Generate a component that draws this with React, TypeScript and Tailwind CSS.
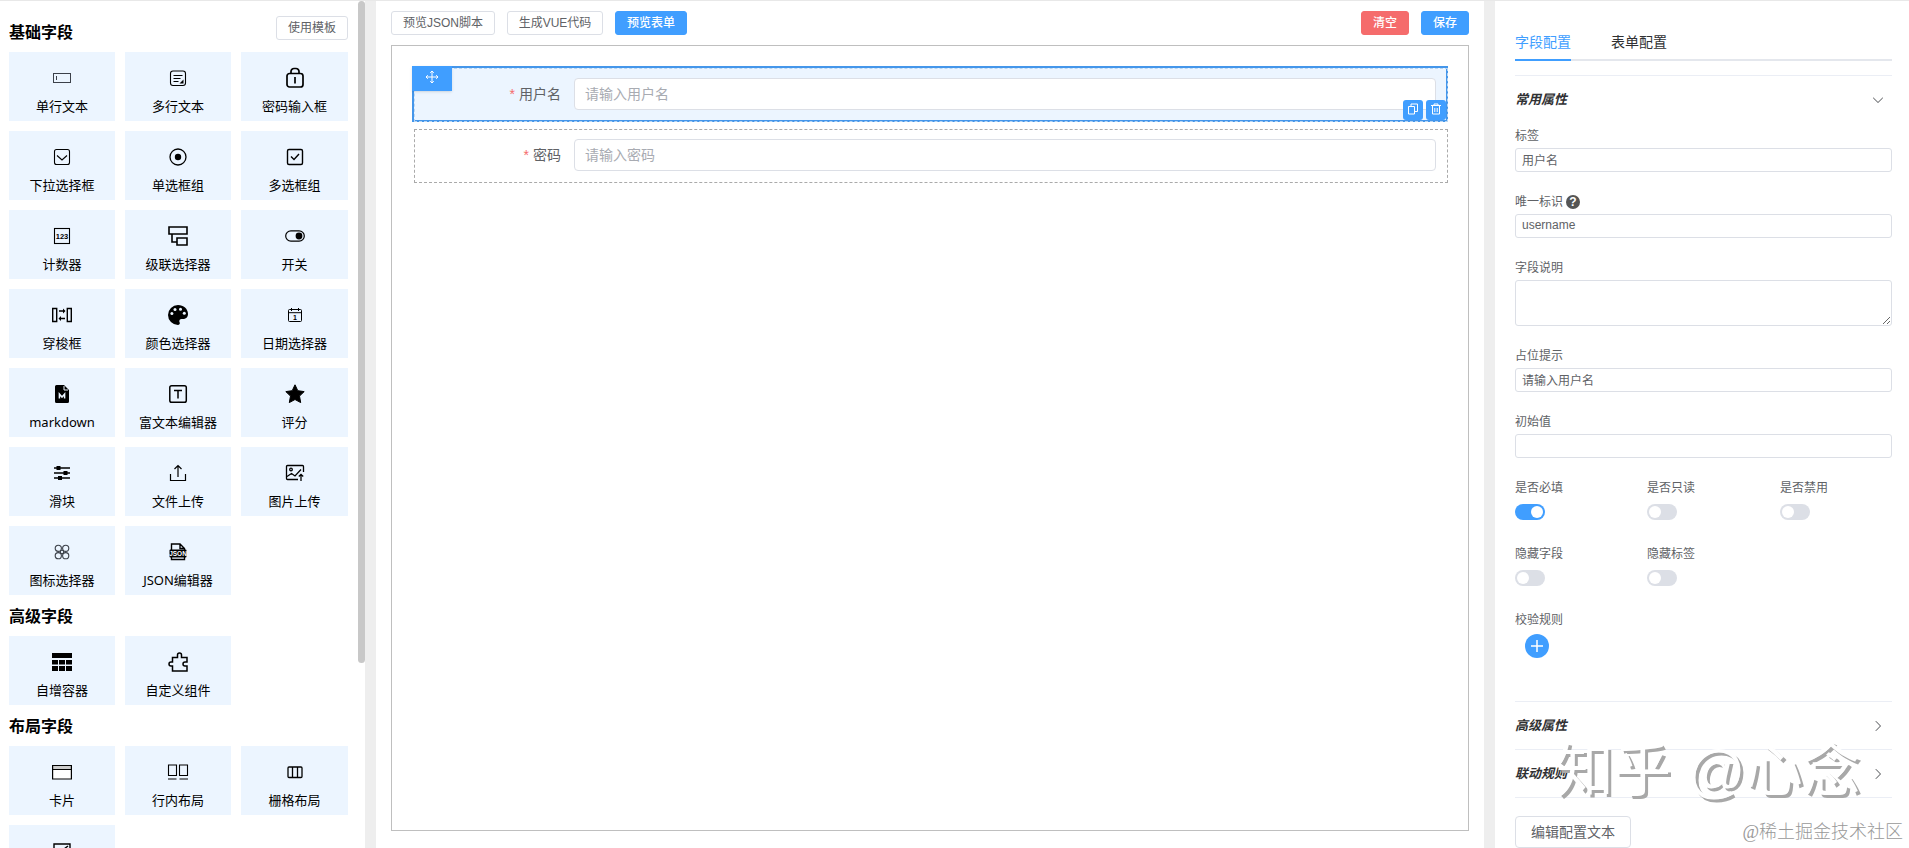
import { useState } from 'react';
import type { ReactNode } from 'react';
import clsx from 'clsx';

type Field = { name: string; icon: ReactNode };

const line = { fill: 'none', stroke: 'currentColor', strokeWidth: 1.1 };

const basicFields: Field[] = [
  {
    name: '单行文本',
    icon: (
      <g fill="none" stroke="#3c414a" strokeWidth="1">
        <rect x="1.5" y="5.5" width="17" height="9" />
        <path d="M4.5 8v4" />
      </g>
    ),
  },
  {
    name: '多行文本',
    icon: (
      <g {...line}>
        <rect x="2.5" y="3" width="15" height="14.5" rx="2.5" />
        <path d="M5.5 7.5h9M5.5 10.5h7M5.5 13.5h5" />
        <path d="M15.5 11.5v4h-4z" fill="currentColor" stroke="none" />
      </g>
    ),
  },
  {
    name: '密码输入框',
    icon: (
      <g fill="none" stroke="currentColor" strokeWidth="1.7">
        <rect x="2" y="5.5" width="16" height="13.500" rx="2.5" />
        <path d="M6 5.5V3.500A3 3 0 0 1 9 .5h2a3 3 0 0 1 3 3v2M10 9v6.500" />
      </g>
    ),
  },
  {
    name: '下拉选择框',
    icon: (
      <g {...line}>
        <rect x="2.5" y="2.5" width="15" height="15" rx="2" />
        <path d="M5 8.500l5 4.500 5-4.500" />
      </g>
    ),
  },
  {
    name: '单选框组',
    icon: (
      <g>
        <circle cx="10" cy="10" r="8" fill="none" stroke="currentColor" strokeWidth="1.300" />
        <circle cx="10" cy="10" r="3.200" fill="currentColor" />
      </g>
    ),
  },
  {
    name: '多选框组',
    icon: (
      <g fill="none" stroke="currentColor" strokeWidth="1.400">
        <rect x="2.500" y="2.500" width="15" height="15" rx="1.500" />
        <path d="M6 9.500l3 3 5-5.500" />
      </g>
    ),
  },
  {
    name: '计数器',
    icon: (
      <g>
        <rect x="2.500" y="2.500" width="15" height="15" {...line} />
        <text x="10" y="12.700" textAnchor="middle" fontSize="7.500" fontWeight="700" fontFamily="Liberation Sans" fill="currentColor">
          123
        </text>
      </g>
    ),
  },
  {
    name: '级联选择器',
    icon: (
      <g fill="none" stroke="currentColor" strokeWidth="1.600">
        <path d="M1 1h18v7H1zM9 12h10v7H9zM4 8v8h5" />
      </g>
    ),
  },
  {
    name: '开关',
    icon: (
      <g>
        <rect x="0.700" y="4.800" width="18.600" height="10.400" rx="5.200" fill="none" stroke="currentColor" strokeWidth="1.200" />
        <circle cx="14" cy="10" r="3.400" fill="currentColor" />
      </g>
    ),
  },
  {
    name: '穿梭框',
    icon: (
      <g fill="none" stroke="currentColor" strokeWidth="1.400">
        <path d="M.7 3.500h4v13h-4zM15.300 3.500h4v13h-4z" />
        <path d="M7 6h5M8 13.500h5" />
        <path d="M11 3.500L13.500 6 11 8.500zM9 11l-2.500 2.500L9 16z" fill="currentColor" stroke="none" />
      </g>
    ),
  },
  {
    name: '颜色选择器',
    icon: (
      <g>
        <path
          d="M10 0a10 10 0 1 0 0 20c1.300 0 1.900-.9 1.800-1.900-.1-1.300-.9-1.600-.3-2.900.5-1 1.500-1.200 3-1.200 3.500 0 5.500-2 5.500-5C20 3.800 15.500 0 10 0z"
          fill="currentColor"
        />
        <g fill="#ecf5ff">
          <circle cx="3.900" cy="8.500" r="1.500" />
          <circle cx="7" cy="4.500" r="1.500" />
          <circle cx="12.500" cy="4.200" r="1.500" />
          <circle cx="16.300" cy="8.200" r="1.500" />
        </g>
      </g>
    ),
  },
  {
    name: '日期选择器',
    icon: (
      <g>
        <path
          d="M3.500 5.500a1 1 0 0 1 1-1h11a1 1 0 0 1 1 1v10a1 1 0 0 1-1 1h-11a1 1 0 0 1-1-1zM3.500 7.700h13M6.500 3v3M13.500 3v3"
          fill="none"
          stroke="currentColor"
        />
        <text x="10" y="14.800" textAnchor="middle" fontSize="7" fontWeight="700" fontFamily="Liberation Sans" fill="currentColor">
          1
        </text>
      </g>
    ),
  },
  {
    name: 'markdown',
    icon: (
      <g>
        <path d="M4.500 1H12l5 5v11.500a1.500 1.500 0 0 1-1.500 1.500h-11A1.500 1.500 0 0 1 3 17.500v-15A1.500 1.500 0 0 1 4.500 1z" fill="currentColor" />
        <path d="M12 2v4h4" fill="none" stroke="#ecf5ff" />
        <path d="M7.400 14.500V10l2.600 3 2.600-3v4.500" fill="none" stroke="#ecf5ff" strokeWidth="1.500" />
      </g>
    ),
  },
  {
    name: '富文本编辑器',
    icon: (
      <g fill="none" stroke="currentColor" strokeWidth="1.500">
        <rect x="1.800" y="1.800" width="16.500" height="16.500" rx="1.800" />
        <path d="M6 6.500h8M10 6.500v8" />
      </g>
    ),
  },
  {
    name: '评分',
    icon: (
      <path
        d="M10 .8l2.800 5.900 6.400.9-4.700 4.500 1.200 6.500L10 15.500l-5.700 3.100 1.200-6.500L.8 7.600l6.400-.9z"
        fill="currentColor"
        stroke="currentColor"
        strokeLinejoin="round"
      />
    ),
  },
  {
    name: '滑块',
    icon: (
      <g>
        <path d="M2 5h16M2 10h16M2 15h16" fill="none" stroke="currentColor" strokeWidth="1.300" />
        <path d="M4.500 3h4v4h-4zM11.500 8h4v4h-4zM6 13h4v4H6z" fill="currentColor" />
      </g>
    ),
  },
  {
    name: '文件上传',
    icon: <path d="M2.500 11v6.500h15V11M10 14V2.500M6.500 6L10 2.500 13.500 6" fill="none" stroke="currentColor" strokeWidth="1.200" />,
  },
  {
    name: '图片上传',
    icon: (
      <g {...line} strokeWidth="1.300">
        <path d="M13 16.500H2.500a1 1 0 0 1-1-1v-12a1 1 0 0 1 1-1h15a1 1 0 0 1 1 1V9" />
        <circle cx="6" cy="6.500" r="1.300" />
        <path d="M2 13.500l4.500-3 3.500 2.500L16 6.500M16 18v-6M13.800 13.500L16 11.300l2.200 2.200" />
      </g>
    ),
  },
  {
    name: '图标选择器',
    icon: (
      <g fill="none" stroke="#3c414a" strokeWidth="1.100">
        <circle cx="6.300" cy="6.300" r="3.100" />
        <circle cx="13.700" cy="6.300" r="3.100" />
        <circle cx="6.300" cy="13.700" r="3.100" />
        <circle cx="13.700" cy="13.700" r="3.100" />
        <circle cx="10" cy="10" r="1.700" />
      </g>
    ),
  },
  {
    name: 'JSON编辑器',
    icon: (
      <g>
        <path d="M3.500 8V2H12l4.500 4.500V8M12 2v4.500h4.500M3.500 15v2.500h13V15" fill="none" stroke="currentColor" strokeWidth="1.400" />
        <rect x="1.500" y="7.500" width="17" height="8" rx="1" fill="currentColor" />
        <text x="10" y="14" textAnchor="middle" fontSize="6.500" fontWeight="700" fontFamily="Liberation Sans" fill="#fff">
          JSON
        </text>
      </g>
    ),
  },
];

const advancedFields: Field[] = [
  {
    name: '自增容器',
    icon: <path d="M0 1h20v5H0zM0 8h6v4.500H0zM7 8h6v4.500H7zM14 8h6v4.500h-6zM0 14h6v5H0zM7 14h6v5H7zM14 14h6v5h-6z" fill="currentColor" />,
  },
  {
    name: '自定义组件',
    icon: (
      <path
        d="M4.500 5.500h5V3a2 2 0 0 1 4 0v2.500H19V10h-2a2 2 0 0 0 0 4h2v5H4.500v-5H3a2 2 0 0 1 0-4h1.500z"
        fill="none"
        stroke="currentColor"
        strokeWidth="1.500"
      />
    ),
  },
];

const layoutFields: Field[] = [
  {
    name: '卡片',
    icon: (
      <g stroke="currentColor" strokeWidth="1.200">
        <path d="M.6 3.500h18.800v13.500H.6z" fill="#fff" />
        <path d="M.6 3.500h18.800v4H.6z" fill="#ccc" />
      </g>
    ),
  },
  {
    name: '行内布局',
    icon: <path d="M.5 3h8v10.500h-8zM11.500 3h8v10.500h-8zM0 17h8.500M11.500 17H20" {...line} />,
  },
  {
    name: '栅格布局',
    icon: (
      <g {...line} strokeWidth="1.300">
        <rect x="3" y="5" width="14" height="10.500" rx="1" />
        <path d="M7.500 5v10.500M12.500 5v10.500" />
      </g>
    ),
  },
  {
    name: '',
    icon: (
      <g {...line} strokeWidth="1.400">
        <path d="M2 18V3h16v15M12 8l4-3" />
      </g>
    ),
  },
];

function FieldGroup({ title, fields, extra }: { title: string; fields: Field[]; extra?: ReactNode }) {
  return (
    <section>
      <div className="flex h-[41px] items-center justify-between">
        <h3 className="text-base font-bold text-black">{title}</h3>
        {extra}
      </div>
      <div className="grid grid-cols-[106px_106px_107px] gap-2.5">
        {fields.map((field, i) => (
          <div key={i} className="flex h-[69px] cursor-move flex-col items-center bg-[#ecf5ff] pt-4 text-black">
            <svg viewBox="0 0 20 20" className="size-5 shrink-0 overflow-visible">
              {field.icon}
            </svg>
            <span className="mt-2 text-[13px] leading-5">{field.name}</span>
          </div>
        ))}
      </div>
    </section>
  );
}

function Button({
  children,
  type = 'default',
  className,
}: {
  children: ReactNode;
  type?: 'default' | 'primary' | 'danger';
  className?: string;
}) {
  return (
    <button
      className={clsx(
        'flex h-6 shrink-0 items-center justify-center rounded-[3px] border text-xs whitespace-nowrap',
        type === 'default' && 'border-[#dcdfe6] bg-white text-[#606266]',
        type === 'primary' && 'border-[#409eff] bg-[#409eff] font-medium text-white',
        type === 'danger' && 'border-[#f56c6c] bg-[#f56c6c] font-medium text-white',
        className,
      )}
    >
      {children}
    </button>
  );
}

function CanvasItem({ label, placeholder }: { label: string; placeholder: string }) {
  return (
    <div className="flex h-8 w-full items-center">
      <label className="w-[159px] shrink-0 pr-[13px] text-right text-sm text-[#606266]">
        <span className="mr-1 text-[#f56c6c]">*</span>
        {label}
      </label>
      <div className="h-8 flex-1 rounded border border-[#dcdfe6] bg-white px-2.5 text-sm leading-[30px] text-[#a8abb2]">{placeholder}</div>
    </div>
  );
}

function FormItem({ label, children }: { label: ReactNode; children: ReactNode }) {
  return (
    <div className="mb-[18px]">
      <div className="mb-[3px] flex h-[21px] items-center pt-0.5 text-xs text-[#606266]">{label}</div>
      <div className="flex min-h-6 items-center">{children}</div>
    </div>
  );
}

function TextInput({ value }: { value: string }) {
  const [text, setText] = useState(value);
  return (
    <input
      value={text}
      onChange={(e) => setText(e.target.value)}
      className="h-6 w-full rounded-[3px] border border-[#dcdfe6] px-1.5 pb-0.5 text-xs text-[#606266] outline-none"
    />
  );
}

function Switch({ defaultOn = false }: { defaultOn?: boolean }) {
  const [on, setOn] = useState(defaultOn);
  return (
    <button
      onClick={() => setOn(!on)}
      className={clsx('flex h-4 w-[30px] items-center rounded-full px-0.5', on ? 'justify-end bg-[#409eff]' : 'justify-start bg-[#dcdfe6]')}
    >
      <span className="size-3 rounded-full bg-white" />
    </button>
  );
}

function CollapseHeader({ title, open = false }: { title: string; open?: boolean }) {
  return (
    <div className="flex h-12 items-center justify-between border-t border-[#ebeef5] pr-2 text-[13px] font-bold text-[#303133]">
      <span className="italic">{title}</span>
      <svg viewBox="0 0 12 12" className={clsx('size-3', open && 'rotate-90')}>
        <path d="M3.800 1.200L8.500 6l-4.700 4.800" fill="none" stroke="#4a4c50" />
      </svg>
    </div>
  );
}

export default function App() {
  return (
    <div className="relative flex h-[848px] w-[1909px] overflow-hidden border-t border-[#e8e8e8] bg-white font-['Liberation_Sans','Noto_Sans_CJK_SC',sans-serif]">
      <aside className="flex w-[365px] shrink-0 justify-between font-['Noto_Sans','Noto_Sans_CJK_SC',sans-serif]">
        <div className="w-[348px] pt-2.5 pl-[9px]">
          <FieldGroup title="基础字段" fields={basicFields} extra={<Button className="mb-[7px] w-[72px]">使用模板</Button>} />
          <FieldGroup title="高级字段" fields={advancedFields} />
          <FieldGroup title="布局字段" fields={layoutFields} />
        </div>
        <div className="h-[662px] w-[7px] rounded-full bg-[#c8c8c8]" />
      </aside>
      <div className="w-[11px] shrink-0 bg-[#eee]" />

      <main className="flex w-[1108px] shrink-0 flex-col px-[15px] pt-2.5">
        <div className="flex gap-3">
          <Button className="w-[104px]">预览JSON脚本</Button>
          <Button className="w-24">生成VUE代码</Button>
          <Button type="primary" className="w-[72px]">
            预览表单
          </Button>
          <div className="flex-1" />
          <Button type="danger" className="w-12">
            清空
          </Button>
          <Button type="primary" className="w-12">
            保存
          </Button>
        </div>
        <div className="mt-2.5 h-[786px] border border-[#bfbfbf] pt-5 pr-5 pl-5">
          <div className="h-14 border-2 border-[#4496ea] bg-[#ecf5ff]">
            <div className="relative -mr-0.5 h-[54px] border border-dashed border-[#b9d6f3] pt-[9px] pr-[11px]">
              <CanvasItem label="用户名" placeholder="请输入用户名" />
              <div className="absolute -top-[3px] -left-[3px] flex h-[25px] w-10 items-center justify-center bg-[#409eff] shadow">
                <svg viewBox="0 0 14 14" className="mb-1 size-3.5">
                  <path
                    d="M7 1v12M1 7h12M5.200 2.800L7 1l1.800 1.800M5.200 11.200L7 13l1.800-1.800M2.800 5.200L1 7l1.800 1.800M11.200 5.200L13 7l-1.800 1.800"
                    fill="none"
                    stroke="#fff"
                  />
                </svg>
              </div>
              <div className="absolute right-px bottom-px flex gap-[3px]">
                <div className="flex size-5 items-center justify-center rounded-[3px] bg-[#409eff]">
                  <svg viewBox="0 0 12 12" className="mb-0.5 size-3">
                    <path d="M1.500 3.500h6v7.500h-6zM4 3.500V1h6.500v7.500h-3" fill="none" stroke="#fff" />
                  </svg>
                </div>
                <div className="flex size-5 items-center justify-center rounded-[3px] bg-[#409eff]">
                  <svg viewBox="0 0 12 12" className="mb-0.5 size-3">
                    <path d="M1 2.500h10M4 2.500V1h4v1.500M2.500 2.500v8.500h7V2.500M4.800 5v4M7.200 5v4" fill="none" stroke="#fff" />
                  </svg>
                </div>
              </div>
            </div>
          </div>
          <div className="mt-[7px] ml-0.5 h-[54px] border border-dashed border-[#aaa] pt-[9px] pr-[11px]">
            <CanvasItem label="密码" placeholder="请输入密码" />
          </div>
        </div>
      </main>
      <div className="w-[11px] shrink-0 bg-[#eee]" />

      <aside className="flex w-[414px] min-w-0 shrink-0 flex-col pr-[17px] pl-5">
        <div className="mt-[21px] flex h-[39px] gap-10 border-b-2 border-[#e4e7ed] text-sm leading-10 text-[#303133]">
          <span className="h-[39px] border-b-2 border-[#409eff] text-[#409eff]">字段配置</span>
          <span>表单配置</span>
        </div>
        <div className="mt-3.5">
          <CollapseHeader title="常用属性" open />
          <div className="h-[578px] pt-px">
            <FormItem label="标签">
              <TextInput value="用户名" />
            </FormItem>
            <FormItem
              label={
                <>
                  唯一标识
                  <span className="ml-[3px] flex size-3.5 items-center justify-center rounded-full bg-[#555] text-xs font-bold text-white">?</span>
                </>
              }
            >
              <TextInput value="username" />
            </FormItem>
            <FormItem label="字段说明">
              <textarea className="block h-[46px] w-full resize-y rounded-[3px] border border-[#dcdfe6] outline-none" />
            </FormItem>
            <FormItem label="占位提示">
              <TextInput value="请输入用户名" />
            </FormItem>
            <FormItem label="初始值">
              <TextInput value="" />
            </FormItem>
            <div className="grid grid-cols-[132px_133px_112px]">
              <FormItem label="是否必填">
                <Switch defaultOn />
              </FormItem>
              <FormItem label="是否只读">
                <Switch />
              </FormItem>
              <FormItem label="是否禁用">
                <Switch />
              </FormItem>
              <FormItem label="隐藏字段">
                <Switch />
              </FormItem>
              <FormItem label="隐藏标签">
                <Switch />
              </FormItem>
            </div>
            <FormItem label="校验规则">
              <button className="mt-0.5 ml-2.5 flex size-6 items-center justify-center rounded-full bg-[#409eff]">
                <svg viewBox="0 0 12 12" className="size-3">
                  <path d="M6 0v12M0 6h12" stroke="#fff" strokeWidth="1.500" />
                </svg>
              </button>
            </FormItem>
          </div>
          <CollapseHeader title="高级属性" />
          <CollapseHeader title="联动规则" />
          <div className="border-t border-[#ebeef5]" />
        </div>
        <button className="mt-[18px] h-8 w-[116px] shrink-0 rounded border border-[#dcdfe6] text-sm text-[#606266]">编辑配置文本</button>
      </aside>

      <div className="pointer-events-none absolute top-[732px] left-[1556px] text-[57.500px] leading-[76px] whitespace-nowrap text-white [text-shadow:3px_3px_0_#a8a8a8]">
        知乎 @心念
      </div>
      <div className="pointer-events-none absolute top-[817px] right-[6px] font-['Liberation_Serif','Noto_Sans_CJK_SC',serif] text-[18px] leading-7 font-light whitespace-nowrap text-[#999]">
        @稀土掘金技术社区
      </div>
    </div>
  );
}
